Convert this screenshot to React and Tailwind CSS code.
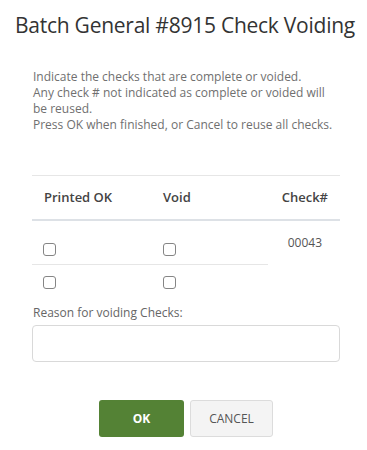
import React from "react";

function Box() {
  return <div className="w-[13px] h-[13px] rounded-[3px] border border-[#858585] bg-white" />;
}

export default function App() {
  return (
    <div className="w-[367px] h-[450px] bg-white text-[#333] font-['Open_Sans',sans-serif]">
      <h1 className="pt-[11px] pl-[15px] text-[21px] leading-[28px] text-[#333] tracking-[-0.25px] whitespace-nowrap">
        Batch General #8915 Check Voiding
      </h1>

      <div className="mt-[30px] pl-[33px] pr-[34px] text-[12px] leading-[16px] text-[#707070]">
        <p>Indicate the checks that are complete or voided.</p>
        <p>Any check # not indicated as complete or voided will be reused.</p>
        <p>Press OK when finished, or Cancel to reuse all checks.</p>
      </div>

      <div className="ml-[32px] mr-[27px] mt-[42px] border-t border-[#e6e6e6]">
        <div className="flex h-[45px] items-center border-b-2 border-[#dde1e6] text-[13px] font-semibold text-[#444]">
          <div className="w-[131px] pl-[12px]">Printed OK</div>
          <div className="w-[105px]">Void</div>
          <div className="flex-1 pr-[12px] text-right">Check#</div>
        </div>
        <div className="flex">
          <div className="w-[236px]">
            <div className="flex h-[44px] items-end pb-[8px] border-b border-[#e6e6e6]">
              <div className="w-[131px] pl-[11px]"><Box /></div>
              <div className="w-[105px]"><Box /></div>
            </div>
            <div className="flex h-[30px] items-start pt-[11px]">
              <div className="w-[131px] pl-[11px]"><Box /></div>
              <div className="w-[105px]"><Box /></div>
            </div>
          </div>
          <div className="flex-1 pt-[14px] pr-[18px] text-right text-[12px] leading-[16px] text-[#555]">00043</div>
        </div>
      </div>

      <div className="ml-[32px] mr-[27px] mt-[10px]">
        <label className="block pl-[1px] text-[12px] leading-[16px] text-[#666]">Reason for voiding Checks:</label>
        <div className="mt-[4px] h-[37px] rounded-[4px] border border-[#d9d9d9] bg-white" />
      </div>

      <div className="mt-[38px] flex justify-center gap-[6px] pl-[5px]">
        <button className="w-[85px] h-[37px] rounded-[3px] bg-[#548235] text-[12px] font-bold text-white">OK</button>
        <button className="w-[83px] h-[37px] rounded-[3px] border border-[#dcdcdc] bg-[#f4f4f4] text-[12px] text-[#555]">CANCEL</button>
      </div>
    </div>
  );
}
